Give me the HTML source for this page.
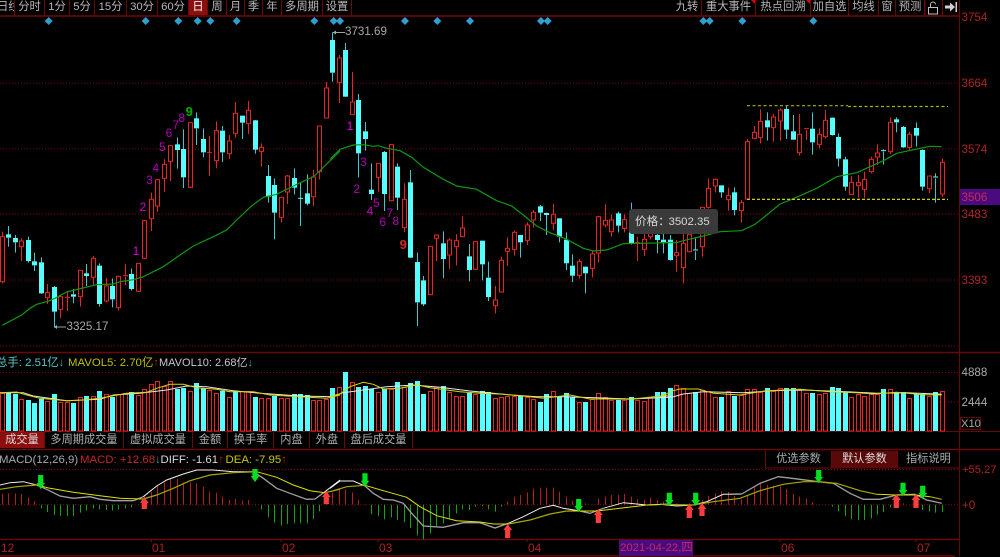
<!DOCTYPE html>
<html lang="zh"><head><meta charset="utf-8"><title>K线</title>
<style>
html,body{margin:0;padding:0;background:#000;width:1000px;height:557px;overflow:hidden}
#r{position:relative;width:1000px;height:557px;overflow:hidden;background:#000;font-family:"Liberation Sans","Noto Sans CJK SC",sans-serif;filter:blur(.2px)}
svg{position:absolute;left:0;top:0}
.t{position:absolute;white-space:nowrap;line-height:14px;font-size:11.4px}
.t span{font-weight:bold}
.b{position:absolute;top:0;height:15px;line-height:15px;font-size:11.3px;color:#b8b8b8;text-align:center;border-right:1px solid #6a0808;box-sizing:border-box;white-space:nowrap;overflow:hidden}
.v{position:absolute;top:432px;height:16px;line-height:16px;font-size:11.2px;color:#b0b0b0;text-align:center;border-right:1px solid #6a0808;box-sizing:border-box;white-space:nowrap}
.a{position:absolute;left:962px;font-size:11.6px;line-height:14px;color:#b02222;white-space:nowrap;transform:translateY(1px)}
.n{position:absolute;font-size:12px;line-height:12px;transform:translate(-50%,-50%);color:#b000b0}
.d{position:absolute;top:540px;font-size:12px;line-height:16px;color:#a82222}
</style></head><body><div id="r">
<svg id="s" width="1000" height="557" xmlns="http://www.w3.org/2000/svg"></svg>

<div class="b" style="left:-3px;width:18px">日线</div>
<div class="b" style="left:15px;width:30px">分时</div>
<div class="b" style="left:45px;width:25px">1分</div>
<div class="b" style="left:70px;width:25px">5分</div>
<div class="b" style="left:95px;width:32px">15分</div>
<div class="b" style="left:127px;width:31px">30分</div>
<div class="b" style="left:158px;width:31px">60分</div>
<div class="b" style="left:189px;width:19px;background:#8c0f0f;color:#eee">日</div>
<div class="b" style="left:208px;width:19px">周</div>
<div class="b" style="left:227px;width:18px">月</div>
<div class="b" style="left:245px;width:18px">季</div>
<div class="b" style="left:263px;width:19px">年</div>
<div class="b" style="left:282px;width:41px">多周期</div>
<div class="b" style="left:323px;width:29px">设置</div>
<div class="b" style="left:673px;width:29px">九转</div>
<div class="b" style="left:702px;width:54px">重大事件</div>
<div class="b" style="left:756px;width:55px">热点回溯</div>
<div class="b" style="left:811px;width:38px">加自选</div>
<div class="b" style="left:849px;width:30px">均线</div>
<div class="b" style="left:879px;width:17px">窗</div>
<div class="b" style="left:896px;width:29px">预测</div>

<div class="a" style="top:10px;left:961.500px">3754</div>
<div class="a" style="top:76px;left:961.500px">3664</div>
<div class="a" style="top:142px;left:961.500px">3574</div>
<div style="position:absolute;left:960px;top:189px;width:40px;height:16px;background:#4a0a80"></div>
<div class="a" style="top:190px;left:961.500px;color:#c82a50">3506</div>
<div class="a" style="top:207px;left:961.500px">3483</div>
<div class="a" style="top:273px;left:961.500px">3393</div>

<div class="n" style="left:136px;top:251px;color:#e000e0">1</div>
<div class="n" style="left:143px;top:207px;color:#d000d0">2</div>
<div class="n" style="left:149.500px;top:180px">3</div>
<div class="n" style="left:155.700px;top:168px">4</div>
<div class="n" style="left:162.300px;top:147px;color:#c000c0">5</div>
<div class="n" style="left:169px;top:133px;color:#b000b0">6</div>
<div class="n" style="left:175.700px;top:125px;color:#b000b0">7</div>
<div class="n" style="left:181.700px;top:118px">8</div>
<div class="n" style="left:189.300px;top:112px;color:#00b000;font-weight:bold;font-size:13px">9</div>
<div class="n" style="left:350px;top:126px;color:#e000e0">1</div>
<div class="n" style="left:356.700px;top:189px">2</div>
<div class="n" style="left:363.300px;top:162px">3</div>
<div class="n" style="left:370px;top:211px;color:#c000c0">4</div>
<div class="n" style="left:376.300px;top:203px;color:#b000b0">5</div>
<div class="n" style="left:382.700px;top:222px">6</div>
<div class="n" style="left:389.700px;top:213px">7</div>
<div class="n" style="left:395.700px;top:221px">8</div>
<div class="n" style="left:403.300px;top:245px;color:#d02828;font-weight:bold;font-size:13px">9</div>

<div class="t" style="left:345px;top:25px;color:#a8a8a8;font-size:11.6px">3731.69</div>
<div class="t" style="left:66.500px;top:320px;color:#a8a8a8;font-size:11.6px">3325.17</div>

<div style="position:absolute;left:628.700px;top:209.300px;width:89.300px;height:25px;background:#3a3a3a;border-radius:3px"></div>
<div class="t" style="left:635px;top:215px;color:#d8d8d8;font-size:11.6px">价格：</div>
<div class="t" style="left:668.500px;top:215px;color:#d8d8d8;font-size:11.4px">3502.35</div>

<div class="t" style="left:-4px;top:356px;color:#58c8c8">总手: 2.51亿<span style="color:#3aa8a8">↓</span></div>
<div class="t" style="left:68px;top:356px;color:#c0c000">MAVOL5: 2.70亿<span style="color:#c02020">↑</span></div>
<div class="t" style="left:159px;top:356px;color:#c8c8c8;font-size:11px">MAVOL10: 2.68亿<span style="color:#3aa8a8">↓</span></div>
<div class="a" style="top:395px;color:#a8a8a8;left:961.500px">2444</div>
<div class="a" style="top:365px;color:#a8a8a8;left:961.500px">4888</div>
<div style="position:absolute;left:960px;top:417px;width:21px;height:13px;box-sizing:border-box;border:1px solid #6a0808;color:#a8a8a8;font-size:11.2px;line-height:12px;text-align:center">X10</div>

<div class="v" style="left:0;width:45px;background:#8c0f0f;color:#ddd">成交量</div>
<div class="v" style="left:45px;width:79px">多周期成交量</div>
<div class="v" style="left:124px;width:69px">虚拟成交量</div>
<div class="v" style="left:193px;width:35px">金额</div>
<div class="v" style="left:228px;width:46px">换手率</div>
<div class="v" style="left:274px;width:36px">内盘</div>
<div class="v" style="left:310px;width:35px">外盘</div>
<div class="v" style="left:345px;width:68px">盘后成交量</div>

<div class="t" style="left:-1px;top:453px;color:#a8a8a8">MACD(12,26,9)</div>
<div class="t" style="left:80px;top:453px;color:#c02828">MACD: +12.68<span style="color:#2aa0a0">↓</span></div>
<div class="t" style="left:160.500px;top:453px;color:#d8d8d8">DIFF: -1.61<span style="color:#c02020">↑</span></div>
<div class="t" style="left:225.500px;top:453px;color:#c8c800">DEA: -7.95<span style="color:#c02020">↑</span></div>

<div class="v" style="left:766px;top:451px;width:66px;height:17px;color:#aaa">优选参数</div>
<div class="v" style="left:832px;top:451px;width:66px;height:17px;color:#ddd;background:#5a0808">默认参数</div>
<div class="v" style="left:898px;top:451px;width:61px;height:17px;color:#aaa;border:0">指标说明</div>

<div class="a" style="top:462px;font-size:11.2px">+55.27</div>
<div class="a" style="top:498px">+0</div>

<div class="d" style="left:1px">12</div>
<div class="d" style="left:152px">01</div>
<div class="d" style="left:282px">02</div>
<div class="d" style="left:379px">03</div>
<div class="d" style="left:528px">04</div>
<div style="position:absolute;left:619px;top:540px;width:74px;height:16px;background:#4a0a80"></div>
<div class="d" style="left:620px;color:#c82a60;font-size:11.4px">2021-04-22,四</div>
<div class="d" style="left:781px">06</div>
<div class="d" style="left:917px">07</div>
</div>
<script>
var s=document.getElementById('s'),o='';
function X(i){return Math.round(2.3+6.483*i-.5)+.5}
var RED='#e82424',CY='#55ffff',DR='#6a0808';
function L(a,b,c,d,col,w){o+='<line x1="'+a+'" y1="'+b+'" x2="'+c+'" y2="'+d+'" stroke="'+col+'" stroke-width="'+(w||1)+'"/>'}
L(0,16,959,16,'#7a0505',1.4);
[83,149,214,280,346,372.5,402,469.5,504.7].forEach(function(y){o+='<line x1="0" y1="'+y+'" x2="959" y2="'+y+'" stroke="#7a0a0a" stroke-dasharray="1 2"/>'});
L(0,352.5,1000,352.5,DR,1.4);L(0,431.5,1000,431.5,DR);L(0,449.5,1000,449.5,DR,1.4);L(0,539.5,959,539.5,DR,1.4);L(0,556,955,556,DR,1.4);
L(959.5,0,959.5,556,DR);
[48.7,145.7,178.3,197.7,210.3,236.7,314.3,333.7,340,405,437.3,470,541,547.7,703.3,709.7,742.3,813.3].forEach(function(x){
 o+='<path d="M'+x+' 17L'+(x+4)+' 21L'+x+' 25L'+(x-4)+' 21Z" fill="#2f9fd0"/>'});
var A='r 395 410 545 550|c 378 403 413 440|c 405 414 427 458|r 415 423 440 483|c 410 420 483 488|c 458 484 496 513|c 472 487 580 582|r 552 578 593 612|c 558 561 635 683|r 583 590 628 654|r 575 592 593 633|c 567 583 590 610|r 510 511 590 620|c 492 520 528 558|r 468 475 532 555|c 490 497 612 620|r 533 558 603 607|c 535 558 598 622|r 527 529 623 632|r 493 527 530 555|c 505 522 567 572|r 489 490 574 576|r 360 362 475 477|r 278 298 356 393|r 237 239 318 335|r 178 193 235 275|r 135 137 184 243|c 112 133 150 206|c 88 147 232 264|r 67 68 262 264|c 37 55 85 135|c 85 117 157 172|r 108 158 160 228|r 64 92 182 205|c 78 92 157 186|r 105 123 161 177|r 6 40 100 113|c 47 47 68 117|r 3 31 71 102|c 60 61 149 161|r 130 142 154 200|c 195 228 290 308|c 235 255 338 418|r 290 292 352 368|r 225 228 276 312|c 205 234 263 283|c 247 295 296 378|c 223 280 311 316|r 210 231 290 318|r 78 78 215 238|r -54 -36 54 54'.split('|');
var B='c 32.3 40 72.7 81.7|r 55 58 82.7 103|c 43 50 96.7 96.7'.split('|');
var C='r -24 66 104 104|c 42 60 220 292|c 126 154 177 212|c 250 329 342 360|r 250 250 292 335|c 213 216 342 393|r 193 194 362 364|c 250 260 353 390|r 310 358 443 456|c 270 307 533 534|c 518 546 667 738|c 588 601 673 678|r 498 499 644 645|r 463 465 475 543|c 454 490 537 595|r 475 480 525 567|r 462 482 500 556|r 409 444 470 471|c 492 529 570 604|r 484 485 568 570|c 482 482 553 601|c 545 593 651 663|r 618 660 677 700|r 530 541 636 638|r 472 505 514 558|r 452 457 508 527|c 465 465 487 533|r 427 435 481 495|r 390 397 420 443|c 375 379 398 423|c 398 399 405 465|r 372 403 430 450|c 415 415 470 487|c 457 479 550 570|c 523 557 587 606|r 537 545 586 596|c 560 560 580 640|r 512 522 565 592|r 408 410 519 548|r 373 421 435 442|r 403 420 455 470|c 395 400 437 457|r 403 419 445 457|c 368 400 492 494|r 470 488 490 543|r 450 478 508 528|r 440 450 470 478|c 450 465 480 520'.split('|');
var D='c 420 449 458 490|c 435 449 510 512|r 450 488 497 545|r 432 460 533 580|r 434 434 485 487|c 445 480 484 510|r 352 352 470 500|r 265 295 352 355|r 265 268 288 307|c 286 286 307 323|r 293 317 329 362|c 292 307 360 376|r 330 338 362 398|r 147 155 327 328|r 108 127 145 147|r 58 94 143 160|c 67 91 112 152|r 72 81 113 155|r 55 60 93 152|c 46 57 119 147|c 75 124 149 150|r 72 133 188 197|r 115 116 120 150|c 67 116 157 194|r 115 133 163 175|r 60 91 140 145|c 82 83 135 137|c 130 141 206 230|c 200 208 290 302|r 258 277 313 315|r 255 277 287 323|r 245 268 298 323|r 200 208 245 250|r 163 189 201 225|c 178 182 185 224|r 83 97 185 192|c 82 88 97 127|c 108 111 172 174|r 125 133 172 180|c 97 114 137 170|c 178 180 290 302|r 258 258 296 310|c 250 261 265 338|r 205 217 312 321'.split('|');
var K=[];
A.forEach(function(q){var p=q.split(' ');K.push([p[0],100+p[1]/3,100+p[2]/3,100+p[3]/3,100+p[4]/3])});
B.forEach(function(q){var p=q.split(' ');K.push([p[0],+p[1],+p[2],+p[3],+p[4]])});
C.forEach(function(q){var p=q.split(' ');K.push([p[0],80+p[1]/3,80+p[2]/3,80+p[3]/3,80+p[4]/3])});
D.forEach(function(q){var p=q.split(' ');K.push([p[0],90+p[1]/3,90+p[2]/3,90+p[3]/3,90+p[4]/3])});
K.forEach(function(k,i){var x=X(i),c=k[0]=='r'?RED:CY,wc=k[0]=='r'?RED:'#3fc8c8';
 L(x,k[1],x,k[2],wc);L(x,k[3],x,k[4],wc);
 var h=k[3]-k[2];
 if(h<1.5){L(x-2.5,k[2],x+2.5,k[2],c);return}
 if(k[0]=='r')o+='<rect x="'+(x-2)+'" y="'+k[2]+'" width="4" height="'+h+'" fill="#000" stroke="'+c+'"/>';
 else o+='<rect x="'+(x-2.5)+'" y="'+k[2]+'" width="5" height="'+h+'" fill="'+c+'"/>';
});
function P(pts,ox,oy,col,w){var d=pts.map(function(p){return (ox+p[0]/3).toFixed(1)+','+(oy+p[1]/3).toFixed(1)}).join(' ');
 o+='<polyline points="'+d+'" fill="none" stroke="'+col+'" stroke-width="'+(w||1)+'"/>'}
var G='#0e9a0e';
P([[7,676],[65,645],[90,625],[110,613],[140,605],[165,595],[200,576],[240,566],[290,554],[340,552],[360,545],[400,539],[430,530],[490,500],[540,465],[580,438],[640,410],[680,390],[710,360],[750,322],[790,292],[830,283],[880,258],[940,230],[960,212],[1020,153]],0,100,G,1.2);
P([[0,238],[30,208],[70,195],[100,194],[130,199],[145,197],[170,205],[210,212],[245,232],[280,262],[340,298],[380,318],[440,328],[500,362],[545,378],[580,405],[620,438],[660,458],[710,478],[760,505],[790,513],[830,510],[880,491],[930,490],[1020,488]],330,80,G,1.2);
P([[0,458],[50,458],[70,452],[130,438],[180,425],[245,422],[285,403],[320,375],[360,342],[400,326],[470,295],[530,260],[590,248],[670,212],[710,190],[780,175],[810,169],[845,170]],660,90,G,1.2);
o+='<line x1="747" y1="105.700" x2="848" y2="105.700" stroke="#b0b000" stroke-width="1.2" stroke-dasharray="3 2.500"/>';
o+='<line x1="848" y1="106.500" x2="948" y2="106.500" stroke="#b0b000" stroke-width="1.2" stroke-dasharray="3 2.500"/>';
o+='<line x1="747" y1="199.300" x2="948" y2="199.300" stroke="#e8e820" stroke-width="1.2" stroke-dasharray="3 2"/>';
L(333,32.5,345,32.5,'#a0a0a0');L(54,327,66,327,'#a0a0a0');L(54.5,318,54.5,327,'#3fc8c8');
o+='<path d="M336 30.500L333 32.500L336 34.500Z" fill="#aaa"/><path d="M57 325L54 327L57 329Z" fill="#aaa"/>';
var V=('r 130|c 128|c 132|r 147|c 150|c 158|c 148|r 153|c 133|r 155|r 156|c 160|r 142|c 138|r 138|c 124|r 133|c 142|r 133|r 128|c 127|r 135|r 118|r 103|r 94|r 108|r 94|c 118|c 113|r 123|c 100|c 113|r 120|r 130|c 122|r 142|c 122|r 122|r 122|c 140|r 145|r 143|c 138|r 145|r 145|c 133|c 133|c 135|r 150|r 150|r 148|c 115|r 110|c 66|r 97|c 110|c 108|c 117|r 127|c 118|r 118|c 97|r 112|c 100|c 93|c 132|r 124|r 112|c 108|r 127|r 138|r 138|c 128|r 133|c 122|c 127|r 145|r 142|r 138|r 139|c 138|r 142|r 147|c 155|c 133|r 122|c 140|c 128|c 142|r 155|c 155|r 148|r 130|r 142|r 150|c 150|r 150|c 142|r 150|r 152|r 142|c 127|c 127|c 113|r 106|r 113|r 128|c 125|r 120|r 122|r 142|c 141|r 122|c 137|r 135|r 116|r 116|r 125|c 113|r 122|r 113|c 113|c 113|r 120|r 130|c 130|r 133|r 128|c 110|c 113|c 127|r 142|r 133|r 139|r 133|r 133|c 118|r 116|c 127|c 127|r 145|c 133|c 133|r 138|c 127|r 124').split('|');
V.forEach(function(q,i){var p=q.split(' '),y=Math.round(350+p[1]/3),x=X(i),h=431-y;
 if(p[0]=='r')o+='<rect x="'+(x-2)+'" y="'+(y+.5)+'" width="4" height="'+(h-.5)+'" fill="#000" stroke="'+RED+'"/>';
 else o+='<rect x="'+(x-2.5)+'" y="'+y+'" width="5" height="'+h+'" fill="'+CY+'"/>';});
var Y='#d8d800',W='#e8e8e8';
P([[0,128],[70,128],[100,138],[200,152],[300,148],[340,135],[420,130],[500,120],[560,108],[620,110],[700,122],[780,130],[900,138],[1000,140]],0,350,W,1);
P([[0,128],[50,126],[80,135],[120,145],[200,152],[250,150],[300,145],[380,130],[440,127],[470,115],[510,103],[550,103],[590,113],[650,118],[690,125],[760,125],[810,135],[900,140],[980,145],[1020,135]],0,350,Y,1);
P([[0,140],[40,128],[100,120],[170,110],[250,105],[330,112],[420,123],[520,133],[620,140],[700,140],[800,143],[900,147],[1020,142]],330,350,W,1);
P([[0,140],[30,132],[60,110],[100,97],[130,103],[160,117],[210,115],[260,104],[300,113],[390,125],[450,130],[520,133],[600,140],[640,145],[720,135],[780,147],[830,147],[900,148],[1020,135]],330,350,Y,1);
P([[0,142],[40,140],[70,132],[130,125],[250,128],[340,122],[430,120],[560,125],[650,130],[740,128],[845,133]],660,350,W,1);
P([[0,140],[40,122],[60,117],[115,117],[160,130],[240,135],[320,122],[420,118],[510,125],[590,128],[640,132],[710,127],[790,134],[845,135]],660,350,Y,1);
var M=[132,130,130,132,143,153,175,186,195,198,198,198,188,182,175,178,180,182,178,175,172,165,140,125,105,97,88,87,98,97,100,110,125,128,140,150,147,152,150,166,178,202,218,226,222,220,220,220,207,184,130,128,115,118,127,150,165,192,198,208,202,210,216,234,256,268,250,228,220,205,190,178,180,170,168,178,185,170,155,140,135,127,116,113,113,113,125,140,152,158,160,165,147,140,135,135,132,140,147,150,143,150,155,160,160,162,160,160,150,137,130,124,126,138,148,137,112,100,105,107,110,117,132,140,147,156,165,165,170,184,198,207,210,210,205,194,186,172,166,160,162,160,180,185,188,186];
M.forEach(function(z,i){var x=X(i),y=450+z/3,up=z<164;
 if(i==140||i==141)return;
 L(x,504.7,x,y,up?'#b81c1c':'#0ea80e',1)});
var w2='#f0f0f0',g2='#a0a0a0',y2='#e0e000',o2='#a8a800';
P([[0,105],[30,98],[70,95],[110,105]],0,450,w2);P([[110,105],[140,118],[180,138],[220,145],[270,140],[300,148],[340,152],[400,152],[430,140]],0,450,g2,1.3);P([[430,140],[470,108],[500,90],[550,72],[590,60],[640,60],[700,65],[760,65]],0,450,w2);P([[760,65],[790,85],[830,115],[870,130],[920,148],[945,147],[975,125]],0,450,g2,1.3);P([[975,125],[1020,90]],0,450,w2);
P([[0,118],[50,110],[110,105]],0,450,o2,1.2);P([[110,105],[150,115],[220,127],[300,137],[360,145],[430,147]],0,450,y2);P([[430,147],[470,135],[520,115],[570,92],[630,75],[700,68],[770,65]],0,450,o2,1.2);P([[770,65],[830,82],[880,105],[930,122],[975,128]],0,450,y2);P([[975,128],[1020,118]],0,450,o2,1.2);
P([[0,115],[30,93],[70,93],[105,108]],330,450,w2);P([[105,108],[130,130],[160,148],[190,150],[220,160],[245,190],[280,228],[340,232],[400,218],[450,218],[495,234],[535,220]],330,450,g2,1.3);P([[535,220],[580,200],[630,175],[670,166],[700,175],[750,183]],330,450,w2);P([[750,183],[780,190],[820,175]],330,450,g2,1.3);P([[820,175],[880,158],[950,165],[1020,162]],330,450,w2);
P([[0,125],[50,110],[105,106]],330,450,o2,1.2);P([[105,106],[160,122],[230,142],[270,170],[320,197],[380,212],[450,216],[490,222],[535,222]],330,450,y2);P([[535,222],[600,210],[660,192],[710,183]],330,450,o2,1.2);P([[710,183],[800,183],[870,175],[950,165],[1020,163]],330,450,y2);
P([[0,163],[50,168],[100,165],[140,155],[190,133],[245,132]],660,450,w2);P([[245,132],[300,100],[355,80],[420,88],[475,95],[520,100],[570,130],[610,148],[660,148],[710,135],[765,133],[800,150],[845,160]],660,450,g2,1.3);
P([[0,163],[100,165],[160,155],[240,145],[300,122],[370,103],[430,95],[475,95]],660,450,o2,1.2);P([[475,95],[530,100],[600,122],[650,133]],660,450,o2,1.2);P([[650,133],[710,135],[765,135],[810,140]],660,450,y2);P([[810,140],[845,148]],660,450,o2,1.2);
function AD(x,a,b){o+='<path d="M'+(x-2.6)+' '+a+'H'+(x+2.6)+'V'+(b-6)+'H'+(x+4.3)+'L'+x+' '+b+'L'+(x-4.3)+' '+(b-6)+'H'+(x-2.6)+'Z" fill="#00e020"/>'}
function AU(x,a,b){o+='<path d="M'+(x-2.6)+' '+b+'H'+(x+2.6)+'V'+(a+6)+'H'+(x+4.3)+'L'+x+' '+a+'L'+(x-4.3)+' '+(a+6)+'H'+(x-2.6)+'Z" fill="#ff3c3c"/>'}
AD(40.7,475,489);AU(144.3,497,509);AD(255,469,482);AU(326.3,491,504);AD(365,473.3,486.7);AU(507.7,524,538);AD(578.7,499,512);AU(598.3,509,523);
AD(669.3,492.7,506);AD(695.7,492.7,506);AU(689.3,504,518);AU(702,503,516);AD(818.7,470,483);AD(903,482.7,496);AU(896.3,494,508);AU(916,494,508);AD(922.7,485.7,499);
o+='<path d="M751 0h5v5z" fill="#e00000"/><path d="M806 0h5v5z" fill="#e00000"/>';
L(925,15,925,0,DR);L(942.5,0,942.5,16,DR);L(959.5,0,959.5,16,DR);L(765.5,450,765.5,468,DR);L(765.5,468,959,468,DR);
o+='<rect x="928.500" y="7.500" width="9" height="6.500" fill="none" stroke="#c0c0c0"/><path d="M930.500 7.500V4.500a2.500 2.500 0 0 1 5 0" fill="none" stroke="#c0c0c0"/>';
o+='<path d="M945 5.500H950V2.500L955 7L950 11.500V8.500H945Z" fill="#d0d0d0"/><rect x="955.500" y="2" width="1.500" height="10" fill="#d0d0d0"/>';
[151.5,281,378,527,780,916].forEach(function(x){L(x,539,x,542,'#7a0a0a')});
s.innerHTML=o;
</script>
</body></html>
